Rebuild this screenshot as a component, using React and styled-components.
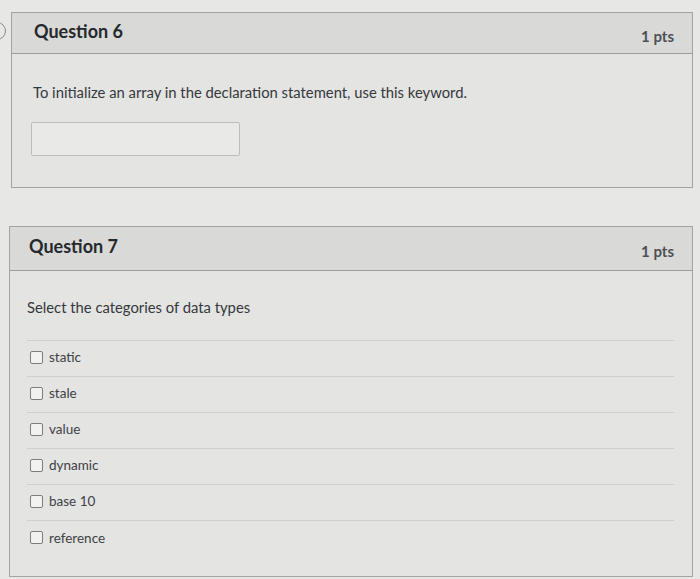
import React from "react";
import styled, { createGlobalStyle } from "styled-components";

const GlobalStyle = createGlobalStyle`
  html, body {
    margin: 0;
    padding: 0;
    background: #e7e7e5;
  }
  body {
    font-family: Lato, "Open Sans", sans-serif;
    color: #2f3237;
  }
`;

const answers = ["static", "stale", "value", "dynamic", "base 10", "reference"];

const App = () => {
  return (
    <>
      <GlobalStyle />
      <Page>
        <Edge />
        <Card $left={11} $width={682}>
          <Header $height={41} $left={22}>
            <Title $top={7}>Question 6</Title>
            <Points $top={14}>1 pts</Points>
          </Header>
          <Body $padTop={29} $padBottom={31} $padLeft={21}>
            <Prompt>
              To initialize an array in the declaration statement, use this
              keyword.
            </Prompt>
            <TextInput type="text" />
          </Body>
        </Card>

        <Card $left={9} $width={684}>
          <Header $height={44} $left={19}>
            <Title $top={8}>Question 7</Title>
            <Points $top={15}>1 pts</Points>
          </Header>
          <Body $padTop={27} $padBottom={19} $padLeft={17}>
            <Prompt>Select the categories of data types</Prompt>
            <AnswerList>
              {answers.map((a) => (
                <Answer key={a}>
                  <Check />
                  <span>{a}</span>
                </Answer>
              ))}
            </AnswerList>
          </Body>
        </Card>
      </Page>
    </>
  );
};

const Page = styled.div`
  position: relative;
  padding-top: 12px;
  display: flex;
  flex-direction: column;
  gap: 38px;
  min-height: 579px;
  box-sizing: border-box;
`;

const Edge = styled.div`
  position: absolute;
  left: -12px;
  top: 22px;
  width: 16px;
  height: 16px;
  border: 1.5px solid #8a8a8a;
  border-radius: 50%;
`;

const Card = styled.div`
  margin-left: ${(p) => p.$left}px;
  width: ${(p) => p.$width}px;
  border: 1px solid #a3a3a1;
  background: #e4e4e2;
  box-sizing: border-box;
`;

const Header = styled.div`
  height: ${(p) => p.$height}px;
  background: #d9d9d7;
  border-bottom: 1px solid #9e9e9c;
  display: flex;
  justify-content: space-between;
  align-items: flex-start;
  padding: 0 18px 0 ${(p) => p.$left}px;
  box-sizing: border-box;
`;

const Title = styled.div`
  margin-top: ${(p) => p.$top}px;
  font-size: 18px;
  font-weight: 700;
  color: #25282c;
`;

const Points = styled.div`
  margin-top: ${(p) => p.$top}px;
  font-size: 15px;
  font-weight: 700;
  color: #4d5156;
`;

const Body = styled.div`
  padding: ${(p) => p.$padTop}px 18px ${(p) => p.$padBottom}px
    ${(p) => p.$padLeft}px;
`;

const Prompt = styled.div`
  font-size: 14.8px;
  line-height: 18px;
  color: #35383c;
`;

const TextInput = styled.input`
  display: block;
  margin: 21px 0 0 -2px;
  width: 209px;
  height: 34px;
  box-sizing: border-box;
  border: 1px solid #bdbdbb;
  border-radius: 2px;
  background: #e9e9e7;
  outline: none;
`;

const AnswerList = styled.div`
  margin-top: 24px;
  border-top: 1px solid #cfcfcd;
`;

const Answer = styled.div`
  height: 36px;
  border-bottom: 1px solid #cfcfcd;
  display: flex;
  align-items: center;
  gap: 6px;
  padding: 0 0 3px 3px;
  box-sizing: border-box;
  font-size: 13.5px;
  color: #3e4146;

  &:last-child {
    border-bottom: none;
  }
`;

const Check = styled.div`
  width: 11px;
  height: 11px;
  border: 1px solid #7d7d7b;
  border-radius: 2px;
  background: #f2f2f0;
`;

export default App;
